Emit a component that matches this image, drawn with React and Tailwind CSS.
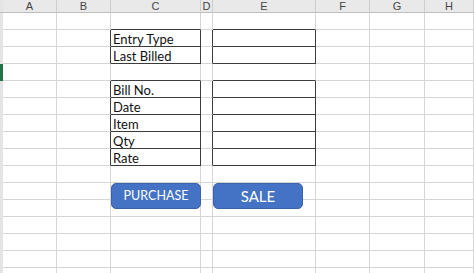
import React from "react";

const COLS = [
  { key: "S", w: "w-[3px]", label: "" },
  { key: "A", w: "w-[54px]", label: "A" },
  { key: "B", w: "w-[54px]", label: "B" },
  { key: "C", w: "w-[90px]", label: "C" },
  { key: "D", w: "w-[12px]", label: "D" },
  { key: "E", w: "w-[103px]", label: "E" },
  { key: "F", w: "w-[54px]", label: "F" },
  { key: "G", w: "w-[55px]", label: "G" },
  { key: "H", w: "flex-1", label: "H" },
];

const LABELS = {
  2: "Entry Type",
  3: "Last Billed",
  5: "Bill No.",
  6: "Date",
  7: "Item",
  8: "Qty",
  9: "Rate",
};

const BOX_ROWS = [2, 3, 5, 6, 7, 8, 9];

function inBox(r, c) {
  return BOX_ROWS.includes(r) && (c === "C" || c === "E");
}

function Cell({ r, ci }) {
  const col = COLS[ci];
  const next = COLS[ci + 1];
  if (col.key === "S") {
    return (
      <div
        className={`${col.w} shrink-0 h-[17px] ${
          r === 4 ? "bg-[#217346]" : "bg-[#e4e4e4]"
        }`}
      />
    );
  }
  const darkR = inBox(r, col.key) || (next && inBox(r, next.key));
  const darkB = inBox(r, col.key) || inBox(r + 1, col.key);
  const label = col.key === "C" ? LABELS[r] : null;
  return (
    <div
      className={`${col.w} shrink-0 h-[17px] border-r border-b ${
        darkR ? "border-r-[#3c3c3c]" : "border-r-[#d6d6d6]"
      } ${darkB ? "border-b-[#3c3c3c]" : "border-b-[#d6d6d6]"} flex items-center pl-[2px] pt-[2px] overflow-hidden whitespace-nowrap text-[13px] leading-none text-[#111]`}
    >
      {label}
    </div>
  );
}

export default function App() {
  const rows = Array.from({ length: 16 }, (_, i) => i + 1);
  return (
    <div
      className="relative w-[474px] h-[273px] overflow-hidden bg-white"
      style={{ fontFamily: "Lato, 'Liberation Sans', sans-serif" }}
    >
      <div className="flex h-[13px]">
        {COLS.map((c) =>
          c.key === "S" ? (
            <div key={c.key} className={`${c.w} shrink-0 bg-[#e4e4e4] border-b border-b-[#bdbdbd]`} />
          ) : (
            <div
              key={c.key}
              className={`${c.w} shrink-0 bg-[#e9e9e9] border-r border-r-[#cdcdcd] border-b border-b-[#bdbdbd] flex items-center justify-center text-[11px] leading-none text-[#444]`}
              style={{ fontFamily: "'Liberation Sans', sans-serif" }}
            >
              {c.label}
            </div>
          )
        )}
      </div>
      {rows.map((r) => (
        <div key={r} className="flex">
          {COLS.map((c, ci) => (
            <Cell key={c.key} r={r} ci={ci} />
          ))}
        </div>
      ))}
      <button className="absolute left-[111px] top-[183px] w-[90px] h-[26px] rounded-[5px] bg-[#4472c4] border border-[#3a62a8] text-white text-[12.5px] leading-none flex items-center justify-center">
        PURCHASE
      </button>
      <button className="absolute left-[213px] top-[183px] w-[90px] h-[26px] rounded-[5px] bg-[#4472c4] border border-[#3a62a8] text-white text-[15px] leading-none flex items-center justify-center">
        SALE
      </button>
    </div>
  );
}
